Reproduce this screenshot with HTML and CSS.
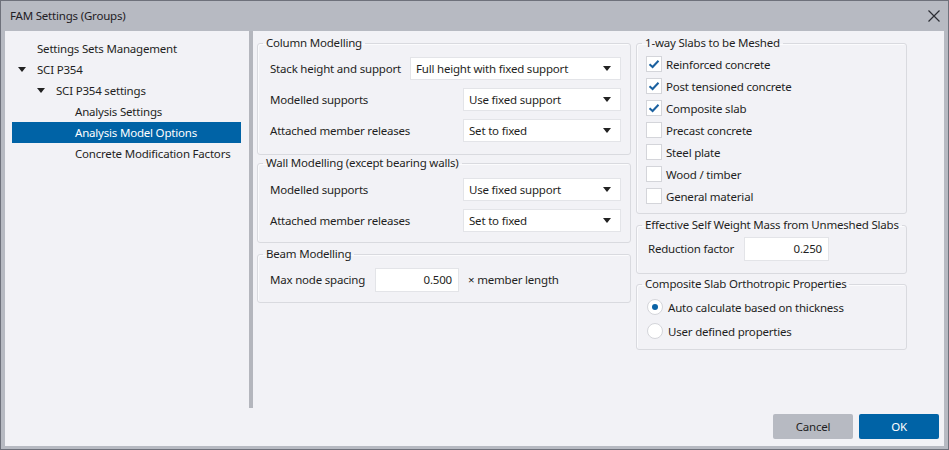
FILE: index.html
```html
<!DOCTYPE html>
<html>
<head>
<meta charset="utf-8">
<link rel="stylesheet" href="styles.css">
</head>
<body>
<div class="window">
  <div class="titlebar">
    <span class="title">FAM Settings (Groups)</span>
    <svg class="close" width="12" height="12" viewBox="0 0 12 12"><path d="M0.5 0.5 L11.5 11.5 M11.5 0.5 L0.5 11.5" stroke="#2b2d33" stroke-width="1.2" fill="none"/></svg>
  </div>
  <div class="client">
    <div class="main">
      <div class="tree">
        <div class="node l0"><span class="twist"></span>Settings Sets Management</div>
        <div class="node l0"><span class="twist"><svg width="8" height="5" viewBox="0 0 8 5"><path d="M0 0 H8 L4 5 Z" fill="#222"/></svg></span>SCI P354</div>
        <div class="node l1"><span class="twist"><svg width="8" height="5" viewBox="0 0 8 5"><path d="M0 0 H8 L4 5 Z" fill="#222"/></svg></span>SCI P354 settings</div>
        <div class="node l2">Analysis Settings</div>
        <div class="node l2 selected">Analysis Model Options</div>
        <div class="node l2">Concrete Modification Factors</div>
      </div>
      <div class="splitter"></div>
      <div class="content">
        <div class="col left">
          <fieldset class="group g-column">
            <legend>Column Modelling</legend>
            <div class="body rows">
              <div class="row"><span class="label">Stack height and support</span><div class="select wide"><span>Full height with fixed support</span><i class="arrow"></i></div></div>
              <div class="row"><span class="label">Modelled supports</span><div class="select"><span>Use fixed support</span><i class="arrow"></i></div></div>
              <div class="row"><span class="label">Attached member releases</span><div class="select"><span>Set to fixed</span><i class="arrow"></i></div></div>
            </div>
          </fieldset>
          <fieldset class="group g-wall">
            <legend>Wall Modelling (except bearing walls)</legend>
            <div class="body rows">
              <div class="row"><span class="label">Modelled supports</span><div class="select"><span>Use fixed support</span><i class="arrow"></i></div></div>
              <div class="row"><span class="label">Attached member releases</span><div class="select"><span>Set to fixed</span><i class="arrow"></i></div></div>
            </div>
          </fieldset>
          <fieldset class="group g-beam">
            <legend>Beam Modelling</legend>
            <div class="body">
              <div class="row start"><span class="label lab-node">Max node spacing</span><div class="input num w84">0.500</div><span class="suffix">× member length</span></div>
            </div>
          </fieldset>
        </div>
        <div class="col right">
          <fieldset class="group g-slabs">
            <legend>1-way Slabs to be Meshed</legend>
            <div class="body checks">
              <div class="check"><span class="box on"><svg width="12" height="10" viewBox="0 0 12 10"><path d="M1.5 5.2 L4.6 8 L10.5 1.8" stroke="#1b61a0" stroke-width="2" fill="none"/></svg></span>Reinforced concrete</div>
              <div class="check"><span class="box on"><svg width="12" height="10" viewBox="0 0 12 10"><path d="M1.5 5.2 L4.6 8 L10.5 1.8" stroke="#1b61a0" stroke-width="2" fill="none"/></svg></span>Post tensioned concrete</div>
              <div class="check"><span class="box on"><svg width="12" height="10" viewBox="0 0 12 10"><path d="M1.5 5.2 L4.6 8 L10.5 1.8" stroke="#1b61a0" stroke-width="2" fill="none"/></svg></span>Composite slab</div>
              <div class="check"><span class="box"></span>Precast concrete</div>
              <div class="check"><span class="box"></span>Steel plate</div>
              <div class="check"><span class="box"></span>Wood / timber</div>
              <div class="check"><span class="box"></span>General material</div>
            </div>
          </fieldset>
          <fieldset class="group g-eff">
            <legend>Effective Self Weight Mass from Unmeshed Slabs</legend>
            <div class="body">
              <div class="row start"><span class="label lab-red">Reduction factor</span><div class="input num w85">0.250</div></div>
            </div>
          </fieldset>
          <fieldset class="group g-comp">
            <legend>Composite Slab Orthotropic Properties</legend>
            <div class="body radios">
              <div class="radio"><span class="circle on"></span>Auto calculate based on thickness</div>
              <div class="radio"><span class="circle"></span>User defined properties</div>
            </div>
          </fieldset>
        </div>
      </div>
    </div>
    <div class="footer">
      <button class="btn cancel">Cancel</button>
      <button class="btn ok">OK</button>
    </div>
  </div>
</div>
</body>
</html>
```
FILE: styles.css
```css
* { box-sizing: border-box; }
html, body { margin: 0; padding: 0; }
body {
  font-family: "Noto Sans", "Open Sans", "Liberation Sans", sans-serif;
  font-size: 11.5px;
  letter-spacing: -0.2px;
  color: #1f1f23;
  background: #b7bac2;
}
.window {
  width: 949px;
  height: 450px;
  border: 1px solid #6e717b;
  background: #b7bac2;
  display: flex;
  flex-direction: column;
}
.titlebar {
  height: 30px;
  flex: none;
  display: flex;
  align-items: center;
  justify-content: space-between;
  padding: 0 8px 1px 9px;
}
.title { color: #1f2024; }
.close { margin-right: 0; }
.client {
  flex: 1;
  margin: 0 4px 3px 4px;
  background: #f2f2f6;
  display: flex;
  flex-direction: column;
}
.main {
  height: 377px;
  flex: none;
  display: flex;
}
.tree {
  width: 244px;
  flex: none;
  padding-top: 7px;
}
.node {
  height: 21px;
  margin-left: 7px;
  width: 229px;
  display: flex;
  align-items: center;
  white-space: nowrap;
}
.node .twist {
  display: inline-flex;
  width: 8px;
  height: 8px;
  align-items: center;
  margin-right: 11px;
}
.node.l0 { padding-left: 6px; }
.node.l1 { padding-left: 25px; }
.node.l2 { padding-left: 63px; }
.node.selected { background: #0063a6; color: #fff; }
.splitter { width: 4px; flex: none; background: #b4b6bd; }
.content {
  flex: 1;
  display: flex;
  gap: 5px;
  padding: 4px 0 0 4px;
}
.col { display: flex; flex-direction: column; }
.col.left { width: 374px; }
.col.right { width: 271px; }
.group {
  margin: 0;
  padding: 0;
  border: 1px solid #d9dadf;
  border-radius: 3px;
  min-width: 0;
  box-shadow: inset 1px 1px 0 #fbfbfd;
}
legend {
  margin-left: 5px;
  padding: 0 3px;
  line-height: 16px;
  white-space: nowrap;
}
.body { padding: 6px 9px 10px 12px; }
.rows { display: flex; flex-direction: column; gap: 8px; }
.row {
  display: flex;
  align-items: center;
  justify-content: space-between;
  height: 23px;
}
.row.start { justify-content: flex-start; }
.label { white-space: nowrap; }
.select {
  width: 158px;
  height: 23px;
  background: #fff;
  border: 1px solid #e3e4e8;
  display: flex;
  align-items: center;
  justify-content: space-between;
  padding: 0 9px 0 5px;
  white-space: nowrap;
}
.select.wide { width: 211px; }
.arrow {
  width: 0; height: 0;
  border-left: 4.5px solid transparent;
  border-right: 4.5px solid transparent;
  border-top: 5px solid #222;
}
.input {
  height: 24px;
  background: #fff;
  border: 1px solid #e3e4e8;
  display: flex;
  align-items: center;
  justify-content: flex-end;
  padding-right: 6px;
}
.lab-node { width: 105px; }
.lab-red { width: 96px; }
.w84 { width: 84px; }
.w85 { width: 85px; }
.suffix { margin-left: 9px; white-space: nowrap; }

.g-column { height: 120px; }
.g-column .body { padding-top: 6px; }
.g-wall { height: 88px; }
.g-wall .body { padding-top: 7px; }
.g-beam { margin-top: 3px; height: 57px; }
.g-beam .body { padding-top: 6px; }

.g-slabs { height: 179px; }
.checks { padding: 2px 8px 5px 9px; }
.check { height: 22px; display: flex; align-items: center; white-space: nowrap; }
.box {
  width: 16px; height: 16px;
  background: #fff;
  border: 1px solid #d4d5da;
  margin-right: 4px;
  display: inline-flex;
  align-items: center;
  justify-content: center;
  flex: none;
}
.g-eff { margin-top: 3px; height: 57px; }
.g-eff .body { padding: 4px 8px 10px 11px; }
.g-comp { margin-top: 2px; height: 74px; }
.radios { padding: 3px 8px 5px 10px; }
.radio { height: 24px; display: flex; align-items: center; white-space: nowrap; }
.circle {
  width: 16px; height: 16px;
  border-radius: 50%;
  background: #fff;
  border: 1px solid #d4d5da;
  margin-right: 5px;
  display: inline-flex;
  align-items: center;
  justify-content: center;
  flex: none;
}
.circle.on::after {
  content: "";
  width: 6px; height: 6px;
  border-radius: 50%;
  background: #0a63a6;
}
.footer {
  flex: 1;
  display: flex;
  justify-content: flex-end;
  align-items: flex-start;
  gap: 6px;
  padding: 6px 5px 0 0;
}
.btn {
  width: 80px;
  height: 25px;
  border: none;
  border-radius: 2px;
  font-family: inherit;
  font-size: 11.5px;
  letter-spacing: -0.2px;
}
.btn.cancel { background: #b7bac2; color: #1f1f23; }
.btn.ok { background: #0063a6; color: #fff; }
```
